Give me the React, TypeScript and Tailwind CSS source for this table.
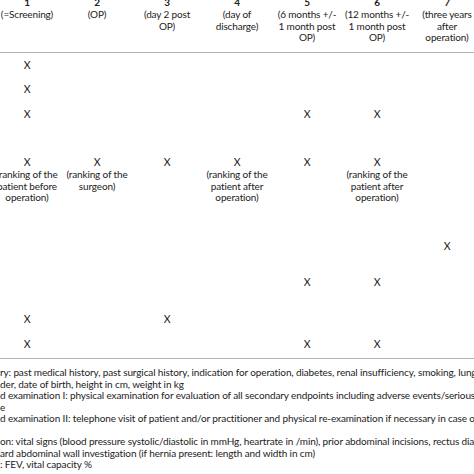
const cols = [
  { n: '1', sub: ['(=Screening)'] },
  { n: '2', sub: ['(OP)'] },
  { n: '3', sub: ['(day 2 post', 'OP)'] },
  { n: '4', sub: ['(day of', 'discharge)'] },
  { n: '5', sub: ['(6 months +/-', '1 month post', 'OP)'] },
  { n: '6', sub: ['(12 months +/-', '1 month post', 'OP)'] },
  { n: '7', sub: ['(three years', 'after', 'operation)'] },
];

type Cell = null | string[];

// each row: height in px (labels sit in the cropped-off left column) + marks per visit
const rows: { h: string; cells: Cell[] }[] = [
  { h: 'h-[24px]', cells: [[], null, null, null, null, null, null] },
  { h: 'h-[25px]', cells: [[], null, null, null, null, null, null] },
  { h: 'h-[48px]', cells: [[], null, null, null, [], [], null] },
  {
    h: 'h-[84px]',
    cells: [
      ['(ranking of the', 'patient before', 'operation)'],
      ['(ranking of the', 'surgeon)'],
      [],
      ['(ranking of the', 'patient after', 'operation)'],
      [],
      ['(ranking of the', 'patient after', 'operation)'],
      null,
    ],
  },
  { h: 'h-[36px]', cells: [null, null, null, null, null, null, []] },
  { h: 'h-[37px]', cells: [null, null, null, null, [], [], null] },
  { h: 'h-[25px]', cells: [[], null, [], null, null, null, null] },
  { h: 'h-[26px]', cells: [[], null, null, null, [], [], null] },
];

const notes = [
  'ry: past medical history, past surgical history, indication for operation, diabetes, renal insufficiency, smoking, lung',
  'der, date of birth, height in cm, weight in kg',
  'd examination I: physical examination for evaluation of all secondary endpoints including adverse events/serious adverse',
  'e',
  'd examination II: telephone visit of patient and/or practitioner and physical re-examination if necessary in case of',
  '\u00a0',
  'on: vital signs (blood pressure systolic/diastolic in mmHg, heartrate in /min), prior abdominal incisions, rectus diastasis',
  'ard abdominal wall investigation (if hernia present: length and width in cm)',
  ': FEV, vital capacity %',
];

export default function App() {
  return (
    <div
      className="w-[474px] h-[474px] overflow-hidden bg-white text-[#222] text-[10px] leading-[11.75px] tracking-[-0.15px]"
      style={{ fontFamily: 'Lato, "Liberation Sans", sans-serif' }}
    >
      <div className="-mt-[3px] -ml-[8px] grid grid-cols-[repeat(7,70px)] pb-[8px]">
        {cols.map((c) => (
          <div key={c.n} className="flex flex-col items-center whitespace-nowrap">
            <span className="font-bold">{c.n}</span>
            {c.sub.map((s) => (
              <span key={s}>{s}</span>
            ))}
          </div>
        ))}
      </div>
      <div className="border-t border-[#b4b4b4]" />
      <div className="-ml-[8px]">
        {rows.map((r, i) => (
          <div key={i} className={`grid grid-cols-[repeat(7,70px)] pt-[7px] ${r.h}`}>
            {r.cells.map((c, j) => (
              <div key={j} className="flex flex-col items-center whitespace-nowrap">
                {c && (
                  <>
                    <span className="text-[10.5px]">X</span>
                    {c.map((s) => (
                      <span key={s}>{s}</span>
                    ))}
                  </>
                )}
              </div>
            ))}
          </div>
        ))}
      </div>
      <div className="border-t border-[#b4b4b4]" />
      <div className="pt-[8px] flex flex-col whitespace-nowrap leading-[11.5px] tracking-[-0.12px]">
        {notes.map((t, i) => (
          <span key={i}>{t}</span>
        ))}
      </div>
    </div>
  );
}
